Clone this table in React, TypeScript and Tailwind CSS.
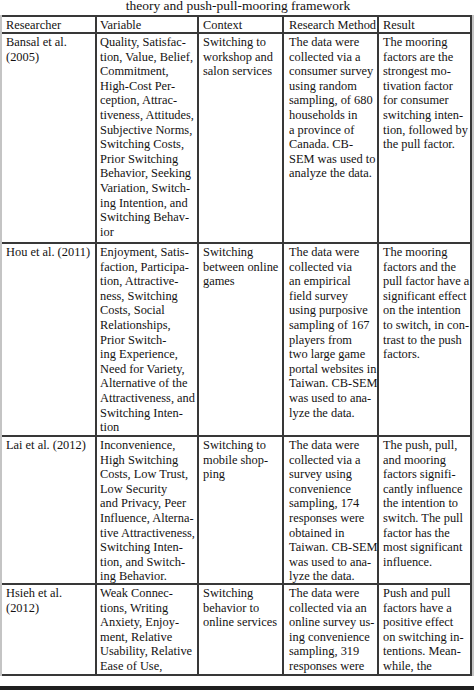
const rows: { cells: string[][]; height: string }[] = [
  {
    height: 'h-[210px]',
    cells: [
      ['Bansal et al.', '(2005)'],
      [
        'Quality, Satisfac-',
        'tion, Value, Belief,',
        'Commitment,',
        'High-Cost Per-',
        'ception, Attrac-',
        'tiveness, Attitudes,',
        'Subjective Norms,',
        'Switching Costs,',
        'Prior Switching',
        'Behavior, Seeking',
        'Variation, Switch-',
        'ing Intention, and',
        'Switching Behav-',
        'ior',
      ],
      ['Switching to', 'workshop and', 'salon services'],
      [
        'The data were',
        'collected via a',
        'consumer survey',
        'using random',
        'sampling, of 680',
        'households in',
        'a province of',
        'Canada. CB-',
        'SEM was used to',
        'analyze the data.',
      ],
      [
        'The mooring',
        'factors are the',
        'strongest mo-',
        'tivation factor',
        'for consumer',
        'switching inten-',
        'tion, followed by',
        'the pull factor.',
      ],
    ],
  },
  {
    height: 'h-[193px]',
    cells: [
      ['Hou et al. (2011)'],
      [
        'Enjoyment, Satis-',
        'faction, Participa-',
        'tion, Attractive-',
        'ness, Switching',
        'Costs, Social',
        'Relationships,',
        'Prior Switch-',
        'ing Experience,',
        'Need for Variety,',
        'Alternative of the',
        'Attractiveness, and',
        'Switching Inten-',
        'tion',
      ],
      ['Switching', 'between online', 'games'],
      [
        'The data were',
        'collected via',
        'an empirical',
        'field survey',
        'using purposive',
        'sampling of 167',
        'players from',
        'two large game',
        'portal websites in',
        'Taiwan. CB-SEM',
        'was used to ana-',
        'lyze the data.',
      ],
      [
        'The mooring',
        'factors and the',
        'pull factor have a',
        'significant effect',
        'on the intention',
        'to switch, in con-',
        'trast to the push',
        'factors.',
      ],
    ],
  },
  {
    height: 'h-[148px]',
    cells: [
      ['Lai et al. (2012)'],
      [
        'Inconvenience,',
        'High Switching',
        'Costs, Low Trust,',
        'Low Security',
        'and Privacy, Peer',
        'Influence, Alterna-',
        'tive Attractiveness,',
        'Switching Inten-',
        'tion, and Switch-',
        'ing Behavior.',
      ],
      ['Switching to', 'mobile shop-', 'ping'],
      [
        'The data were',
        'collected via a',
        'survey using',
        'convenience',
        'sampling, 174',
        'responses were',
        'obtained in',
        'Taiwan. CB-SEM',
        'was used to ana-',
        'lyze the data.',
      ],
      [
        'The push, pull,',
        'and mooring',
        'factors signifi-',
        'cantly influence',
        'the intention to',
        'switch. The pull',
        'factor has the',
        'most significant',
        'influence.',
      ],
    ],
  },
  {
    height: 'h-[91px]',
    cells: [
      ['Hsieh et al.', '(2012)'],
      [
        'Weak Connec-',
        'tions, Writing',
        'Anxiety, Enjoy-',
        'ment, Relative',
        'Usability, Relative',
        'Ease of Use,',
      ],
      ['Switching', 'behavior to', 'online services'],
      [
        'The data were',
        'collected via an',
        'online survey us-',
        'ing convenience',
        'sampling, 319',
        'responses were',
      ],
      [
        'Push and pull',
        'factors have a',
        'positive effect',
        'on switching in-',
        'tentions. Mean-',
        'while, the',
      ],
    ],
  },
];

const headers = ['Researcher', 'Variable', 'Context', 'Research Method', 'Result'];

// column widths, each includes its own left border
const cols = 'grid grid-cols-[93px_102px_85px_95px_93px]';
const pads = ['pl-[4px]', 'pl-[3px]', 'pl-[4px]', 'pl-[5px]', 'pl-[4px]'];

function Cell({ lines, index }: { lines: string[]; index: number }) {
  return (
    <div className={`${index > 0 ? 'border-l-2 border-[#383838]' : ''} ${pads[index]} pt-[1px]`}>
      {lines.map((line, i) => (
        <div key={i} className="whitespace-nowrap">
          {line}
        </div>
      ))}
    </div>
  );
}

export default function App() {
  return (
    <div
      className="w-[474px] h-[690px] bg-white overflow-hidden text-[#141212]"
      style={{ fontFamily: '"Liberation Serif", "Times New Roman", serif' }}
    >
      {/* Caption, cut off at the top like the scanned page */}
      <div className="h-[15px] overflow-hidden">
        <p className="mt-[-1px] text-center text-[13.5px] leading-[14px] pl-[2px]">
          theory and push-pull-mooring framework
        </p>
      </div>

      <div className="flex">
        <div className="w-[2px] bg-[#c4c4c4]" />
        <div className="w-[470px] border-r-2 border-b-2 border-[#383838] text-[12.4px] leading-[14.6px]">
          {/* Header */}
          <div className={`${cols} h-[17px] border-t-2 border-[#383838]`}>
            {headers.map((h, i) => (
              <Cell key={h} lines={[h]} index={i} />
            ))}
          </div>

          {rows.map((row, r) => (
            <div key={r} className={`${cols} ${row.height} border-t-2 border-[#383838]`}>
              {row.cells.map((lines, i) => (
                <Cell key={i} lines={lines} index={i} />
              ))}
            </div>
          ))}
        </div>
        <div className="w-[2px] bg-[#c4c4c4]" />
      </div>

      <div className="mt-[10px] h-[4px] bg-[#1f1f1f]" />
    </div>
  );
}
